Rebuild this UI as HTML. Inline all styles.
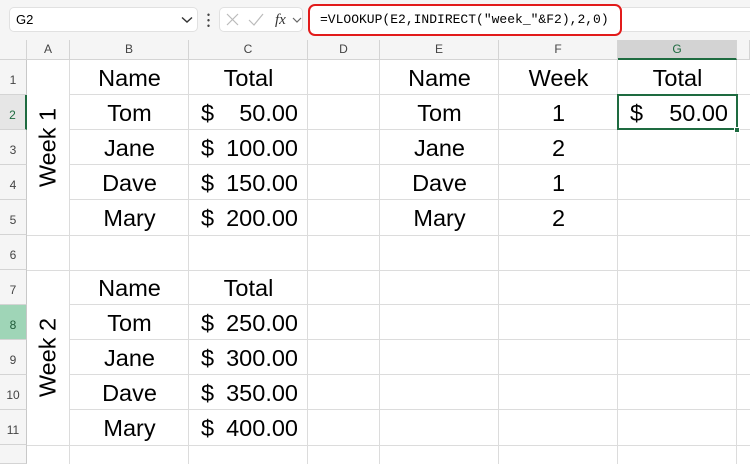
<!DOCTYPE html>
<html><head><meta charset="utf-8"><style>
*{margin:0;padding:0;box-sizing:border-box}
body{width:750px;height:464px;overflow:hidden;background:#fff;font-family:"Liberation Sans",Arial,sans-serif;position:relative}
.a{position:absolute}
.tb{left:0;top:0;width:750px;height:40px;background:#f5f5f5}
.box{background:#fff;border:1px solid #e1e1e1;border-radius:5px}
.hdr{top:40px;height:20px;background:#f5f5f5;border-bottom:1px solid #d4d4d4;border-right:1px solid #d4d4d4;font-size:12px;color:#444;text-align:center;line-height:19px}
.rh{left:0;width:27px;height:35px;background:#f5f5f5;border-bottom:1px solid #d4d4d4;border-right:1px solid #c8c8c8;font-size:12px;color:#444;text-align:center;line-height:40px}
.vl{top:60px;width:1px;height:404px;background:#dcdcdc}
.hl{left:27px;width:723px;height:1px;background:#dcdcdc}
.c{font-size:23.5px;color:#000;text-align:center;height:35px;line-height:37px}
.m{font-size:23.5px;height:35px;line-height:37px}
.rot{font-size:23.5px;transform:rotate(-90deg);white-space:nowrap}
</style></head><body>
<div class="a tb"></div>
<div class="a box" style="left:9px;top:7px;width:189px;height:25px;font-size:13px;line-height:23px;padding-left:6px">G2</div>
<svg class="a" style="left:181px;top:16px" width="12" height="8"><path d="M1 1.5L6 6 11 1.5" fill="none" stroke="#333" stroke-width="1.4"/></svg>
<div class="a" style="left:207px;top:12px;width:3px;height:16px;background:radial-gradient(circle,#444 1px,transparent 1.4px) 0 0/3px 5.5px"></div>
<div class="a box" style="left:219px;top:7px;width:84px;height:25px"></div>
<svg class="a" style="left:225px;top:12px" width="80" height="16"><path d="M2 2L13 13M13 2L2 13" stroke="#bbb" stroke-width="1.2"/><path d="M24 8L29 13 38 2" fill="none" stroke="#bbb" stroke-width="1.2"/><text x="50" y="12" font-family="Liberation Serif,serif" font-style="italic" font-size="15" fill="#333">fx</text><path d="M68 6L72 10 76 6" fill="none" stroke="#666" stroke-width="1.2"/></svg>
<div class="a" style="left:622px;top:7px;width:128px;height:25px;background:#fff;border-top:1px solid #e1e1e1;border-bottom:1px solid #e1e1e1"></div>
<div class="a" style="left:308px;top:4px;width:314px;height:32px;border:2px solid #e21b1b;border-radius:7px;background:#fff"></div>
<div class="a" style="left:320px;top:11px;font-family:'Liberation Mono',monospace;font-size:13px;line-height:18px;color:#000;white-space:nowrap">=VLOOKUP(E2,INDIRECT("week_"&amp;F2),2,0)</div>

<div class="a hdr" style="left:0;width:27px"></div>
<div class="a hdr" style="left:27px;width:43px">A</div>
<div class="a hdr" style="left:70px;width:119px">B</div>
<div class="a hdr" style="left:189px;width:119px">C</div>
<div class="a hdr" style="left:308px;width:72px">D</div>
<div class="a hdr" style="left:380px;width:119px">E</div>
<div class="a hdr" style="left:499px;width:119px">F</div>
<div class="a hdr" style="left:618px;width:119px;background:#d3d3d3;color:#1e6b40;border-bottom:2px solid #1e6b40">G</div>
<div class="a hdr" style="left:737px;width:13px"></div>

<div class="a rh" style="top:60px">1</div>
<div class="a rh" style="top:95px;color:#1e6b40;background:#e6e6e6;border-right:2px solid #1e6b40">2</div>
<div class="a rh" style="top:130px">3</div>
<div class="a rh" style="top:165px">4</div>
<div class="a rh" style="top:200px">5</div>
<div class="a rh" style="top:235px">6</div>
<div class="a rh" style="top:270px">7</div>
<div class="a rh" style="top:305px;background:#9fd5b7;color:#1e5a38">8</div>
<div class="a rh" style="top:340px">9</div>
<div class="a rh" style="top:375px">10</div>
<div class="a rh" style="top:410px">11</div>
<div class="a rh" style="top:445px;height:19px"></div>

<div class="a hl" style="top:235px"></div><div class="a hl" style="top:270px"></div><div class="a hl" style="top:445px"></div>
<div class="a" style="left:70px;top:94px;width:680px;height:1px;background:#dcdcdc"></div>
<div class="a" style="left:70px;top:129px;width:680px;height:1px;background:#dcdcdc"></div>
<div class="a" style="left:70px;top:164px;width:680px;height:1px;background:#dcdcdc"></div>
<div class="a" style="left:70px;top:199px;width:680px;height:1px;background:#dcdcdc"></div>
<div class="a" style="left:70px;top:304px;width:680px;height:1px;background:#dcdcdc"></div>
<div class="a" style="left:70px;top:339px;width:680px;height:1px;background:#dcdcdc"></div>
<div class="a" style="left:70px;top:374px;width:680px;height:1px;background:#dcdcdc"></div>
<div class="a" style="left:70px;top:409px;width:680px;height:1px;background:#dcdcdc"></div>
<div class="a vl" style="left:69px"></div><div class="a vl" style="left:188px"></div><div class="a vl" style="left:307px"></div><div class="a vl" style="left:379px"></div><div class="a vl" style="left:498px"></div><div class="a vl" style="left:617px"></div><div class="a vl" style="left:736px"></div>

<div class="a rot" style="left:-2px;top:134px;width:100px;text-align:center">Week 1</div>
<div class="a rot" style="left:-2px;top:344px;width:100px;text-align:center">Week 2</div>

<div class="a c" style="left:70px;top:60px;width:119px">Name</div>
<div class="a c" style="left:70px;top:95px;width:119px">Tom</div>
<div class="a c" style="left:70px;top:130px;width:119px">Jane</div>
<div class="a c" style="left:70px;top:165px;width:119px">Dave</div>
<div class="a c" style="left:70px;top:200px;width:119px">Mary</div>
<div class="a c" style="left:189px;top:60px;width:119px">Total</div>
<div class="a m" style="left:201px;top:95px">$</div><div class="a m" style="left:189px;top:95px;width:109px;text-align:right">50.00</div>
<div class="a m" style="left:201px;top:130px">$</div><div class="a m" style="left:189px;top:130px;width:109px;text-align:right">100.00</div>
<div class="a m" style="left:201px;top:165px">$</div><div class="a m" style="left:189px;top:165px;width:109px;text-align:right">150.00</div>
<div class="a m" style="left:201px;top:200px">$</div><div class="a m" style="left:189px;top:200px;width:109px;text-align:right">200.00</div>

<div class="a c" style="left:70px;top:270px;width:119px">Name</div>
<div class="a c" style="left:70px;top:305px;width:119px">Tom</div>
<div class="a c" style="left:70px;top:340px;width:119px">Jane</div>
<div class="a c" style="left:70px;top:375px;width:119px">Dave</div>
<div class="a c" style="left:70px;top:410px;width:119px">Mary</div>
<div class="a c" style="left:189px;top:270px;width:119px">Total</div>
<div class="a m" style="left:201px;top:305px">$</div><div class="a m" style="left:189px;top:305px;width:109px;text-align:right">250.00</div>
<div class="a m" style="left:201px;top:340px">$</div><div class="a m" style="left:189px;top:340px;width:109px;text-align:right">300.00</div>
<div class="a m" style="left:201px;top:375px">$</div><div class="a m" style="left:189px;top:375px;width:109px;text-align:right">350.00</div>
<div class="a m" style="left:201px;top:410px">$</div><div class="a m" style="left:189px;top:410px;width:109px;text-align:right">400.00</div>

<div class="a c" style="left:380px;top:60px;width:119px">Name</div>
<div class="a c" style="left:380px;top:95px;width:119px">Tom</div>
<div class="a c" style="left:380px;top:130px;width:119px">Jane</div>
<div class="a c" style="left:380px;top:165px;width:119px">Dave</div>
<div class="a c" style="left:380px;top:200px;width:119px">Mary</div>
<div class="a c" style="left:499px;top:60px;width:119px">Week</div>
<div class="a c" style="left:499px;top:95px;width:119px">1</div>
<div class="a c" style="left:499px;top:130px;width:119px">2</div>
<div class="a c" style="left:499px;top:165px;width:119px">1</div>
<div class="a c" style="left:499px;top:200px;width:119px">2</div>
<div class="a c" style="left:618px;top:60px;width:119px">Total</div>
<div class="a" style="left:617px;top:94px;width:121px;height:36px;border:2px solid #1e6b40;background:#fff"></div>
<div class="a" style="left:734px;top:127px;width:6px;height:6px;background:#1e6b40;border:1px solid #fff"></div>
<div class="a m" style="left:630px;top:95px">$</div><div class="a m" style="left:618px;top:95px;width:110px;text-align:right">50.00</div>
</body></html>
